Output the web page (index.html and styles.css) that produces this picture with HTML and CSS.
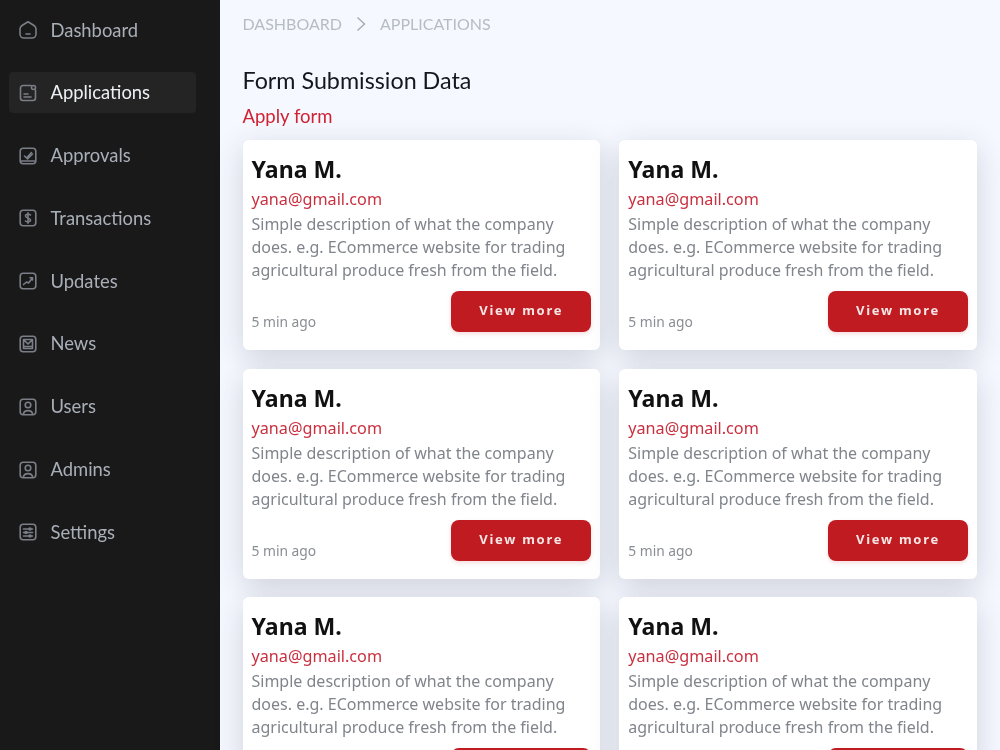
FILE: index.html
```html
<!DOCTYPE html>
<html lang="en">
<head>
<meta charset="utf-8">
<title>Applications</title>
<link rel="stylesheet" href="styles.css">
</head>
<body>
<div class="app">
  <nav class="sidebar">
    <a class="nav-item"><svg class="icon" viewBox="0 0 20 20"><path d="M10 1.800 L16 5.500 Q18 7 18 9 V14 a4 4 0 0 1 -4 4 H6 a4 4 0 0 1 -4 -4 V9 Q2 7 4 5.500 Z"/><path d="M8 14 H12"/></svg><span>Dashboard</span></a>
    <a class="nav-item active"><svg class="icon" viewBox="0 0 20 20"><path d="M13 2.500 H5 a2.500 2.500 0 0 0 -2.500 2.500 V15 a2.500 2.500 0 0 0 2.500 2.500 H15 a2.500 2.500 0 0 0 2.500 -2.500 V7"/><circle cx="15.500" cy="4.500" r="2"/><path d="M6 11 H10 M6 14 H13"/></svg><span>Applications</span></a>
    <a class="nav-item"><svg class="icon" viewBox="0 0 20 20"><rect x="2.200" y="2.200" width="15.600" height="15.600" rx="3"/><path d="M6.500 10 L8.500 12 L13.500 6.500 M9.500 13 L14.500 8 M3 15 H17"/></svg><span>Approvals</span></a>
    <a class="nav-item"><svg class="icon" viewBox="0 0 20 20"><rect x="2.200" y="2.200" width="15.600" height="15.600" rx="3"/><path d="M12.500 7 C11.500 5.800 7.500 5.800 7.500 8 C7.500 10.500 12.500 9.500 12.500 12 C12.500 14.200 8.500 14.200 7.500 13 M10 4.800 V15.200"/></svg><span>Transactions</span></a>
    <a class="nav-item"><svg class="icon" viewBox="0 0 20 20"><rect x="2.200" y="2.200" width="15.600" height="15.600" rx="3"/><path d="M5.500 13.500 L8.500 11 L10.500 12 L14.500 7 M12 6.800 H14.500 V9"/></svg><span>Updates</span></a>
    <a class="nav-item"><svg class="icon" viewBox="0 0 20 20"><rect x="2.200" y="2.200" width="15.600" height="15.600" rx="3"/><path d="M5.500 5.500 H14.500 V14.500 H5.500 Z M5.500 5.500 L10 10 L14.500 5.500 M5.500 12.500 H14.500"/></svg><span>News</span></a>
    <a class="nav-item"><svg class="icon" viewBox="0 0 20 20"><rect x="2.200" y="2.200" width="15.600" height="15.600" rx="3"/><circle cx="10" cy="8" r="2.800"/><path d="M5.500 17 C6 12.500 14 12.500 14.500 17"/></svg><span>Users</span></a>
    <a class="nav-item"><svg class="icon" viewBox="0 0 20 20"><rect x="2.200" y="2.200" width="15.600" height="15.600" rx="3"/><circle cx="10" cy="8" r="2.800"/><path d="M5.500 17 C6 12.500 14 12.500 14.500 17"/></svg><span>Admins</span></a>
    <a class="nav-item"><svg class="icon" viewBox="0 0 20 20"><rect x="2.200" y="2.200" width="15.600" height="15.600" rx="3"/><path d="M5.500 7 H14.500 M5.500 10.500 H14.500 M5.500 14 H14.500"/><circle cx="12" cy="7" r="1"/><circle cx="8" cy="10.500" r="1"/><circle cx="12" cy="14" r="1"/></svg><span>Settings</span></a>
  </nav>
  <main class="main">
    <div class="crumbs">
      <span>DASHBOARD</span>
      <svg class="chev" viewBox="0 0 12 16"><path d="M2.500 1.500 L9.500 8 L2.500 14.500"/></svg>
      <span>APPLICATIONS</span>
    </div>
    <h1 class="title">Form Submission Data</h1>
    <p class="subtitle">Apply form</p>
    <section class="grid">
      <article class="card"><h2 class="name">Yana M.</h2><a class="email">yana@gmail.com</a><p class="desc">Simple description of what the company does. e.g. ECommerce website for trading agricultural produce fresh from the field.</p><div class="foot"><span class="time">5 min ago</span><button class="btn">View more</button></div></article>
      <article class="card"><h2 class="name">Yana M.</h2><a class="email">yana@gmail.com</a><p class="desc">Simple description of what the company does. e.g. ECommerce website for trading agricultural produce fresh from the field.</p><div class="foot"><span class="time">5 min ago</span><button class="btn">View more</button></div></article>
      <article class="card"><h2 class="name">Yana M.</h2><a class="email">yana@gmail.com</a><p class="desc">Simple description of what the company does. e.g. ECommerce website for trading agricultural produce fresh from the field.</p><div class="foot"><span class="time">5 min ago</span><button class="btn">View more</button></div></article>
      <article class="card"><h2 class="name">Yana M.</h2><a class="email">yana@gmail.com</a><p class="desc">Simple description of what the company does. e.g. ECommerce website for trading agricultural produce fresh from the field.</p><div class="foot"><span class="time">5 min ago</span><button class="btn">View more</button></div></article>
      <article class="card"><h2 class="name">Yana M.</h2><a class="email">yana@gmail.com</a><p class="desc">Simple description of what the company does. e.g. ECommerce website for trading agricultural produce fresh from the field.</p><div class="foot"><span class="time">5 min ago</span><button class="btn">View more</button></div></article>
      <article class="card"><h2 class="name">Yana M.</h2><a class="email">yana@gmail.com</a><p class="desc">Simple description of what the company does. e.g. ECommerce website for trading agricultural produce fresh from the field.</p><div class="foot"><span class="time">5 min ago</span><button class="btn">View more</button></div></article>
    </section>
  </main>
</div>
</body>
</html>
```
FILE: styles.css
```css
html, body {
  margin: 0;
  height: 100%;
  overflow: hidden;
  background: #f5f8ff;
}
.app {
  display: flex;
  height: 750px;
  overflow: hidden;
}
.sidebar {
  width: 220px;
  flex: none;
  box-sizing: border-box;
  background: #191919;
  padding: 9px 24px 0 9px;
  display: flex;
  flex-direction: column;
  gap: 21.800px;
}
.nav-item, .crumbs, .title, .subtitle, .grid {
  filter: blur(0.4px);
}
.nav-item {
  display: flex;
  align-items: center;
  gap: 12.500px;
  height: 41px;
  padding-left: 9px;
  border-radius: 4px;
  color: #a9afb8;
  font: 18.400px/22px Lato, sans-serif;
}
.nav-item.active {
  background: #242424;
  color: #eef0f4;
}
.icon {
  width: 20px;
  height: 20px;
  flex: none;
  margin-top: 1px;
  fill: none;
  stroke: #7a7e87;
  stroke-width: 1.600;
  stroke-linecap: round;
  stroke-linejoin: round;
}
.main {
  flex: 1;
  min-width: 0;
  padding: 12px 23px 0 22.500px;
}
.crumbs {
  display: flex;
  align-items: center;
  gap: 13px;
  color: #b6bcc4;
  font: 16px/24px Lato, sans-serif;
}
.chev {
  width: 12px;
  height: 16px;
  fill: none;
  stroke: #a9aeb5;
  stroke-width: 1.500;
}
.title {
  margin: 26px 0 0;
  color: #15171c;
  font: 400 23.300px/36px Lato, sans-serif;
}
.subtitle {
  margin: 6px 0 0;
  color: #cf2233;
  font: 18.500px/24px Lato, sans-serif;
}
.grid {
  margin-top: 12px;
  display: grid;
  grid-template-columns: 1fr 1fr;
  gap: 18.700px 19px;
}
.card {
  box-sizing: border-box;
  height: 210px;
  padding: 13px 9px 0;
  background: #fff;
  border-radius: 6px;
  box-shadow: 0 8px 30px rgba(40, 45, 60, 0.18);
  font-family: "Noto Sans", sans-serif;
}
.name {
  margin: 0;
  color: #111;
  font: 700 23.100px/33px "Noto Sans", sans-serif;
}
.email {
  display: block;
  margin-top: 2px;
  color: #c9303f;
  font-size: 16.200px;
  line-height: 22px;
}
.desc {
  margin: 3px 0 0;
  color: #80858c;
  font-size: 16px;
  line-height: 23px;
}
.foot {
  margin-top: 9px;
  display: flex;
  justify-content: space-between;
  align-items: flex-end;
}
.time {
  color: #8a8e94;
  font-size: 13.800px;
  line-height: 20px;
}
.btn {
  width: 140px;
  height: 41px;
  padding: 0 0 3px;
  border: 0;
  border-radius: 8px;
  background: #bf1b20;
  color: #f6e6e6;
  font: 700 13px "Noto Sans", sans-serif;
  letter-spacing: 1.700px;
  box-shadow: 0 2px 4px rgba(190, 30, 30, 0.15);
}
```
